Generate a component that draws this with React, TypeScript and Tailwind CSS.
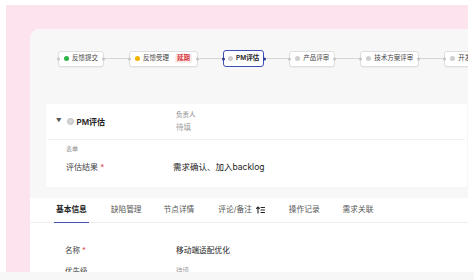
import React from "react";

const font = { fontFamily: 'Inter, "Noto Sans CJK SC", "Noto Sans", sans-serif' };

type NodeProps = {
  label: string;
  dot: string;
  active?: boolean;
  badge?: string;
};

function FlowNode({ label, dot, active, badge }: NodeProps) {
  return (
    <div
      className={
        active
          ? "relative flex h-[17px] shrink-0 items-center gap-[3px] rounded-[3px] border-[1.5px] border-[#3d4fb8] bg-white px-[4px] text-[6.5px] font-semibold text-[#222]"
          : "relative flex h-[16px] shrink-0 items-center gap-[3px] rounded-[3px] border border-[#dedede] bg-white px-[5px] text-[6.5px] text-[#444] shadow-[0_1px_1px_rgba(0,0,0,0.04)]"
      }
    >
      <span className={active ? "absolute left-[-2.5px] top-1/2 h-[3px] w-[3px] -translate-y-1/2 rounded-full bg-[#2c3a8f]" : "absolute left-[-2px] top-1/2 h-[3px] w-[3px] -translate-y-1/2 rounded-full bg-[#c4c4c4]"} />
      <span className={"h-[5px] w-[5px] shrink-0 rounded-full " + dot} />
      <span className="whitespace-nowrap leading-none">{label}</span>
      {badge ? (
        <span className="ml-[3px] whitespace-nowrap rounded-[2px] bg-[#fdeaea] px-[2px] py-[1px] text-[6.5px] font-bold leading-none text-[#d4363b]">
          {badge}
        </span>
      ) : null}
      <span className={active ? "absolute right-[-2.5px] top-1/2 h-[3px] w-[3px] -translate-y-1/2 rounded-full bg-[#2c3a8f]" : "absolute right-[-2px] top-1/2 h-[3px] w-[3px] -translate-y-1/2 rounded-full bg-[#c4c4c4]"} />
    </div>
  );
}

function Line() {
  return <div className="h-px w-[25px] shrink-0 bg-[#d6d6d6]" />;
}

function SortIcon() {
  return (
    <svg width="9" height="8" viewBox="0 0 9 8" fill="none" stroke="#222" strokeWidth="1.1" strokeLinecap="round">
      <path d="M2 7V1M0.6 2.4L2 1l1.4 1.4" />
      <path d="M5 1.5h3.5M5 4h3.5M5 6.5h3.5" />
    </svg>
  );
}

export default function App() {
  const tabs = ["缺陷管理", "节点详情"];
  return (
    <div className="h-[280px] w-[474px] overflow-hidden bg-[#f7f7f7]" style={font}>
      <div className="h-[5px] bg-white" />
      <div className="flex h-[267px]">
        <div className="w-[6px] shrink-0 bg-white" />
        <div className="w-[462px] shrink-0 overflow-hidden bg-[#fde3ee] pl-[24px] pt-[24px]">
          <div className="flex h-full w-[440px] flex-col overflow-hidden rounded-tl-[9px] bg-[#f7f7f7]">
            {/* flow */}
            <div className="flex items-center pl-[28px] pt-[21px]">
              <FlowNode label="反馈提交" dot="bg-[#2fb344]" />
              <Line />
              <FlowNode label="反馈受理" dot="bg-[#f0b400]" badge="延期" />
              <Line />
              <FlowNode label="PM评估" dot="bg-[#cfcfcf]" active />
              <Line />
              <FlowNode label="产品评审" dot="bg-[#cfcfcf]" />
              <Line />
              <FlowNode label="技术方案评审" dot="bg-[#cfcfcf]" />
              <Line />
              <FlowNode label="开发" dot="bg-[#cfcfcf]" />
            </div>

            {/* PM card */}
            <div className="ml-[16px] mr-[3px] mt-[37px] rounded-[3px] bg-white">
              <div className="flex h-[35px] items-center">
                <span className="ml-[10px] text-[5.5px] text-[#555]">▼</span>
                <span className="ml-[5px] h-[7px] w-[7px] rounded-full border border-[#bdbdbd] bg-[#d6d6d6]" />
                <span className="ml-[3px] text-[8px] font-semibold text-[#222]">PM评估</span>
                <div className="ml-[71px] flex flex-col gap-[5px]">
                  <span className="text-[6.5px] leading-none text-[#888]">负责人</span>
                  <span className="text-[7.5px] leading-none text-[#999]">待填</span>
                </div>
              </div>
              <div className="mx-[2px] h-px bg-[#f0f0f0]" />
              <div className="flex h-[47px] flex-col pl-[20px]">
                <span className="mt-[6px] text-[6px] leading-none text-[#888]">表单</span>
                <div className="mt-[11px] flex items-center">
                  <span className="w-[107px] text-[8px] leading-none text-[#444]">
                    评估结果 <span className="text-[#e5484d]">*</span>
                  </span>
                  <span className="text-[8.5px] leading-none text-[#222]">需求确认、加入backlog</span>
                </div>
              </div>
            </div>

            {/* tabs panel */}
            <div className="mr-[2px] mt-[11px] flex-1 bg-white">
              <div className="flex h-[25px] items-stretch border-b border-[#eeeeee] pl-[24px]">
                <div className="relative flex items-center px-[2px] text-[7.7px] font-semibold text-[#222]">
                  基本信息
                  <span className="absolute bottom-[-1px] left-0 right-0 h-[1.5px] bg-[#4454b8]" />
                </div>
                {tabs.map((t) => (
                  <div key={t} className="ml-[22px] flex items-center text-[7.7px] text-[#555]">
                    {t}
                  </div>
                ))}
                <div className="ml-[24px] flex items-center gap-[4px] text-[7.7px] text-[#555]">
                  评论/备注 <SortIcon />
                </div>
                <div className="ml-[24px] flex items-center text-[7.7px] text-[#555]">操作记录</div>
                <div className="ml-[23px] flex items-center text-[7.7px] text-[#555]">需求关联</div>
              </div>
              <div className="flex flex-col pl-[35px]">
                <div className="mt-[24px] flex items-center">
                  <span className="w-[111px] text-[7.5px] leading-none text-[#444]">
                    名称 <span className="text-[#e5484d]">*</span>
                  </span>
                  <span className="text-[7.7px] leading-none text-[#222]">移动端适配优化</span>
                </div>
                <div className="mt-[13px] flex items-center">
                  <span className="w-[111px] text-[7.5px] leading-none text-[#444]">优先级</span>
                  <span className="text-[6.5px] leading-none text-[#999]">待填</span>
                </div>
              </div>
            </div>
          </div>
        </div>
        <div className="flex-1 bg-white" />
      </div>
    </div>
  );
}
